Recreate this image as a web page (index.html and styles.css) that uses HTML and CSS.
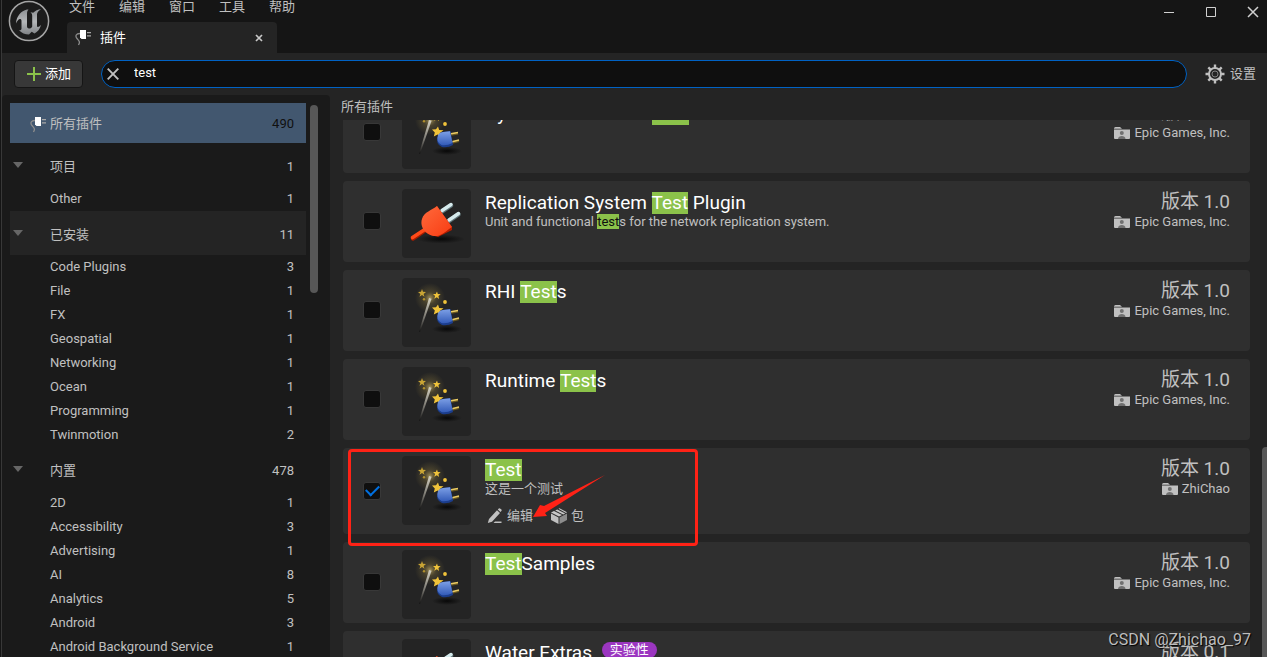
FILE: index.html
```
<!DOCTYPE html>
<html lang="zh-CN">
  <head>
    <meta charset="UTF-8">
    <meta name="viewport" content="width=device-width, initial-scale=1.0">
    <title>插件</title>
    <link rel="stylesheet" href="styles.css">
  </head>
  <body>
    <!-- shared icons -->
    <svg class="sprite" aria-hidden="true">
      <defs>
        <radialGradient id="glow">
          <stop offset="0" stop-color="#d8c070" stop-opacity="0.7"/>
          <stop offset="0.4" stop-color="#9a8440" stop-opacity="0.3"/>
          <stop offset="1" stop-color="#9a8440" stop-opacity="0"/>
        </radialGradient>
        <radialGradient id="shadow">
          <stop offset="0" stop-color="#080808"/>
          <stop offset="1" stop-color="#080808" stop-opacity="0"/>
        </radialGradient>
        <linearGradient id="wand" x1="0" y1="0" x2="0" y2="1">
          <stop offset="0" stop-color="#d8d4c4"/>
          <stop offset="0.6" stop-color="#74726c"/>
          <stop offset="1" stop-color="#111"/>
        </linearGradient>
        <linearGradient id="bluePlug" x1="0" y1="0" x2="0" y2="1">
          <stop offset="0" stop-color="#7da0e6"/>
          <stop offset="1" stop-color="#335bb8"/>
        </linearGradient>
        <linearGradient id="redPlug" x1="0" y1="0" x2="1" y2="1">
          <stop offset="0" stop-color="#ff6a3c"/>
          <stop offset="1" stop-color="#f83c12"/>
        </linearGradient>
        <linearGradient id="metal" x1="0" y1="0" x2="0" y2="1">
          <stop offset="0" stop-color="#8c8f92"/>
          <stop offset="0.5" stop-color="#b4b6b8"/>
          <stop offset="1" stop-color="#808386"/>
        </linearGradient>
      </defs>
      <symbol id="icon-wand" viewBox="0 0 69 69">
        <circle cx="28" cy="20" r="15" fill="url(#glow)"/>
        <ellipse cx="45" cy="51" rx="15" ry="4" fill="url(#shadow)"/>
        <path d="M27 20l2.600.8L18 54l-1-.5z" fill="url(#wand)"/>
        <path d="M20 11l1 2.800 3 .2-2.400 1.900.9 2.900-2.500-1.700-2.500 1.700.9-2.900-2.400-1.900 3-.2z" fill="#c9a535"/>
        <g fill="#f0c33a">
          <path d="M35 13.500l.8 2.600 2.900.1-2.300 1.800.7 2.900-2.300-1.700-2.600 1.500.9-2.700-2.100-1.900 2.700-.1z"/>
          <path d="M36 26.500l1.200 3.400 4.300.3-3.300 2.500 1 4.200-3.600-2.300-3.800 1.900 1-4.100-2.800-2.900 4-.2z"/>
          <circle cx="43" cy="24" r="1.900"/>
          <circle cx="22" cy="21.300" r="1.200" fill="#b08f2c"/>
        </g>
        <path d="M49 34.500l7-1.300M50 42.500l7-1.600" stroke="#6a5820" stroke-width="2.400" fill="none"/>
        <path d="M49 33.800l7-1.300M50 41.700l7-1.600" stroke="#e8c964" stroke-width="1.500" fill="none"/>
        <path d="M36 36q2-4 5-4l7.500-1L51 45q-5 3-11 2-7-3-4-11z" fill="#1b3d8c"/>
        <path d="M36 35q2-3 5-3l7-.8L50.500 43q-6 3-11 2-6-3-3.500-10z" fill="url(#bluePlug)"/>
      </symbol>
      <symbol id="icon-plug" viewBox="0 0 69 69">
        <ellipse cx="39" cy="50" rx="24" ry="4.500" fill="url(#shadow)"/>
        <path d="M11 49.500L22 42" stroke="#a81c00" stroke-width="4.500" stroke-linecap="round"/>
        <path d="M10.500 48.500L22 41" stroke="#ff4a18" stroke-width="3.600" stroke-linecap="round"/>
        <path d="M40 22.500l9-6M47 32l9.500-6.500" stroke="#5f7478" stroke-width="4.500" stroke-linecap="round"/>
        <path d="M40 21.500l9-6M47 31l9.500-6.500" stroke="#d5eaec" stroke-width="3.400" stroke-linecap="round"/>
        <path d="M35 17l15 21v3l-14 7-10-3-6-12z" fill="#b31d00"/>
        <path d="M35 17l15 21c-5 3-9 8-15 9-9 1-18-8-15-17 2-7 10-9 15-13z" fill="url(#redPlug)"/>
      </symbol>
      <symbol id="icon-socket" viewBox="0 0 17 17">
        <path d="M5 4.500C1 4.500 0 7 2 9.500s3.500 3 1.500 6.500" fill="none" stroke="#8c8c8c" stroke-width="1.300"/>
        <path d="M5 1h6v9H6.500L5 8.500z" fill="#fff"/>
        <path d="M12 3h4v1.300h-4zM12 6.200h4v1.300h-4z" fill="#a8a8a8"/>
      </symbol>
      <symbol id="icon-folder" viewBox="0 0 16 12">
        <path d="M0 1.500Q0 0 1.500 0H6l2 1.700H0z" fill="#c0c0c0"/>
        <path d="M0 2.500h16V11q0 1-1 1H1q-1 0-1-1z" fill="#c0c0c0"/>
        <circle cx="7.800" cy="6" r="2" fill="#707070"/>
        <path d="M4 12c0-4 7.500-4 7.500 0z" fill="#707070"/>
      </symbol>
    </svg>

    <div class="window">
      <header class="titlebar">
        <svg class="logo" viewBox="0 0 42 42" aria-hidden="true">
          <circle cx="21" cy="21" r="19.600" fill="#1c1c1c" stroke="#a5a5a5" stroke-width="1.500"/>
          <path d="M19 9.500C13 11 8.500 16 8 23.500c1.500-3.500 3-5 4.500-4.500 1 .3 1 1.500 1 3v6.500c0 1.500-1 2-2.500 1.700 2.500 2.800 6 4.200 10 4.300l2.700-2.800 2.800 1.700c3-1.500 5.500-4.500 6.500-8.500-1.800 2-3.300 2.500-4 1.500V14c.5-2 2-3.500 4-5-3 .3-6 1.800-7.800 3.800l-2.700-.5c1.500 1.200 1.700 2.200 1.700 3.700v10.500c-.7 1.500-2 2.200-3.200 2-1.500-.2-2-1-2-2.500V14c0-2 .3-3 1.500-4.500z" fill="url(#metal)"/>
        </svg>
        <div class="titlebar-main">
          <nav class="menu">
            <button>文件</button>
            <button>编辑</button>
            <button>窗口</button>
            <button>工具</button>
            <button>帮助</button>
          </nav>
          <div class="tab">
            <svg class="socket-icon" aria-hidden="true"><use href="#icon-socket"/></svg>
            <span class="tab-title">插件</span>
            <button class="tab-close" aria-label="关闭标签">
              <svg viewBox="0 0 8 8"><path d="M1 1l6 6M7 1L1 7" stroke="#c8c8c8" stroke-width="1.700"/></svg>
            </button>
          </div>
        </div>
        <div class="window-controls">
          <button aria-label="最小化"><svg viewBox="0 0 12 12"><path d="M1 6.500h10" stroke="#d0d0d0"/></svg></button>
          <button aria-label="最大化"><svg viewBox="0 0 12 12"><path d="M1.500 1.500h9v9h-9z" fill="none" stroke="#d0d0d0"/></svg></button>
          <button aria-label="关闭"><svg viewBox="0 0 12 12"><path d="M1 1l10 10M11 1L1 11" stroke="#d0d0d0" stroke-width="1.500"/></svg></button>
        </div>
      </header>

      <div class="toolbar">
        <button class="btn-add">
          <svg viewBox="0 0 14 14" aria-hidden="true"><path d="M7 0v14M0 7h14" stroke="#8bc24a" stroke-width="2"/></svg>
          添加
        </button>
        <div class="search">
          <button class="search-clear" aria-label="清除">
            <svg viewBox="0 0 12 12"><path d="M.7.700l10.600 10.600M11.300.700L.7 11.300" stroke="#c0c0c0" stroke-width="1.900"/></svg>
          </button>
          <input type="text" value="test" aria-label="搜索插件">
        </div>
        <button class="btn-settings">
          <svg viewBox="0 0 20 20" aria-hidden="true">
            <g fill="none" stroke="#c0c0c0">
              <circle cx="10" cy="10" r="6" stroke-width="2"/>
              <circle cx="10" cy="10" r="3" stroke="#808080"/>
              <path d="M10 .500v4M10 15.500v4M.5 10h4M15.500 10h4M3.300 3.300l2.800 2.800M13.900 13.900l2.800 2.800M16.700 3.300l-2.800 2.800M6.100 13.900l-2.800 2.800" stroke-width="2.400"/>
            </g>
          </svg>
          设置
        </button>
      </div>

      <div class="content">
        <aside class="sidebar">
          <nav class="categories">
            <a class="category-all" href="#all">
              <svg class="socket-icon" aria-hidden="true"><use href="#icon-socket"/></svg>
              <span>所有插件</span><span class="count">490</span>
            </a>
            <a class="category-group" href="#project"><span>项目</span><span class="count">1</span></a>
            <a class="category" href="#other"><span>Other</span><span class="count">1</span></a>
            <a class="category-group hovered" href="#installed"><span>已安装</span><span class="count">11</span></a>
            <a class="category" href="#code"><span>Code Plugins</span><span class="count">3</span></a>
            <a class="category" href="#file"><span>File</span><span class="count">1</span></a>
            <a class="category" href="#fx"><span>FX</span><span class="count">1</span></a>
            <a class="category" href="#geospatial"><span>Geospatial</span><span class="count">1</span></a>
            <a class="category" href="#networking"><span>Networking</span><span class="count">1</span></a>
            <a class="category" href="#ocean"><span>Ocean</span><span class="count">1</span></a>
            <a class="category" href="#programming"><span>Programming</span><span class="count">1</span></a>
            <a class="category" href="#twinmotion"><span>Twinmotion</span><span class="count">2</span></a>
            <a class="category-group" href="#builtin"><span>内置</span><span class="count">478</span></a>
            <a class="category" href="#2d"><span>2D</span><span class="count">1</span></a>
            <a class="category" href="#accessibility"><span>Accessibility</span><span class="count">3</span></a>
            <a class="category" href="#advertising"><span>Advertising</span><span class="count">1</span></a>
            <a class="category" href="#ai"><span>AI</span><span class="count">8</span></a>
            <a class="category" href="#analytics"><span>Analytics</span><span class="count">5</span></a>
            <a class="category" href="#android"><span>Android</span><span class="count">3</span></a>
            <a class="category" href="#android-bg"><span>Android Background Service</span><span class="count">1</span></a>
          </nav>
          <div class="sidebar-scroll"></div>
        </aside>

        <main class="plugins">
          <div class="breadcrumb">所有插件</div>
          <div class="plugin-view">
            <div class="plugin-list">
              <article class="plugin">
                <input type="checkbox" aria-label="Python Automation Test">
                <svg class="thumb" aria-hidden="true"><use href="#icon-wand"/></svg>
                <div class="plugin-info">
                  <h2>Python Automation <mark>Test</mark></h2>
                </div>
                <div class="plugin-meta">
                  <div class="version">版本 1.0</div>
                  <div class="author"><svg aria-hidden="true"><use href="#icon-folder"/></svg>Epic Games, Inc.</div>
                </div>
              </article>

              <article class="plugin">
                <input type="checkbox" aria-label="Replication System Test Plugin">
                <svg class="thumb" aria-hidden="true"><use href="#icon-plug"/></svg>
                <div class="plugin-info">
                  <h2>Replication System <mark>Test</mark> Plugin</h2>
                  <p>Unit and functional <mark>test</mark>s for the network replication system.</p>
                </div>
                <div class="plugin-meta">
                  <div class="version">版本 1.0</div>
                  <div class="author"><svg aria-hidden="true"><use href="#icon-folder"/></svg>Epic Games, Inc.</div>
                </div>
              </article>

              <article class="plugin">
                <input type="checkbox" aria-label="RHI Tests">
                <svg class="thumb" aria-hidden="true"><use href="#icon-wand"/></svg>
                <div class="plugin-info">
                  <h2>RHI <mark>Test</mark>s</h2>
                </div>
                <div class="plugin-meta">
                  <div class="version">版本 1.0</div>
                  <div class="author"><svg aria-hidden="true"><use href="#icon-folder"/></svg>Epic Games, Inc.</div>
                </div>
              </article>

              <article class="plugin">
                <input type="checkbox" aria-label="Runtime Tests">
                <svg class="thumb" aria-hidden="true"><use href="#icon-wand"/></svg>
                <div class="plugin-info">
                  <h2>Runtime <mark>Test</mark>s</h2>
                </div>
                <div class="plugin-meta">
                  <div class="version">版本 1.0</div>
                  <div class="author"><svg aria-hidden="true"><use href="#icon-folder"/></svg>Epic Games, Inc.</div>
                </div>
              </article>

              <article class="plugin">
                <input type="checkbox" aria-label="Test" checked>
                <svg class="thumb" aria-hidden="true"><use href="#icon-wand"/></svg>
                <div class="plugin-info">
                  <h2><mark>Test</mark></h2>
                  <p>这是一个测试</p>
                  <div class="plugin-actions">
                    <button>
                      <svg viewBox="0 0 16 16" aria-hidden="true"><path d="M.8 15l1.200-4 8-8.700 3 2.700-8 8.700zM10.800 1.500l1-1q.8-.6 1.600.2l1 .9q.6.700 0 1.300l-1 1.100zM6.500 15L8 13.500h6.500V15z" fill="#c0c0c0"/></svg>
                      编辑
                    </button>
                    <button>
                      <svg viewBox="0 0 16 16" aria-hidden="true">
                        <path d="M0 4.500l3-1.500 8 4-3 1.500zM4.200 2.400l2-1 8 4-2 1.100zM7.500.800L8.500.300l7.500 4-1 .6z" fill="#c8c8c8"/>
                        <path d="M0 5.500l7.500 4V16L0 12z" fill="#c0c0c0"/>
                        <path d="M8.500 9.500L16 5.500V12l-7.500 4z" fill="#8c8c8c"/>
                      </svg>
                      包
                    </button>
                  </div>
                </div>
                <div class="plugin-meta">
                  <div class="version">版本 1.0</div>
                  <div class="author"><svg aria-hidden="true"><use href="#icon-folder"/></svg>ZhiChao</div>
                </div>
              </article>

              <article class="plugin">
                <input type="checkbox" aria-label="TestSamples">
                <svg class="thumb" aria-hidden="true"><use href="#icon-wand"/></svg>
                <div class="plugin-info">
                  <h2><mark>Test</mark>Samples</h2>
                </div>
                <div class="plugin-meta">
                  <div class="version">版本 1.0</div>
                  <div class="author"><svg aria-hidden="true"><use href="#icon-folder"/></svg>Epic Games, Inc.</div>
                </div>
              </article>

              <article class="plugin">
                <input type="checkbox" aria-label="Water Extras">
                <svg class="thumb" aria-hidden="true"><use href="#icon-plug"/></svg>
                <div class="plugin-info">
                  <h2>Water Extras <span class="badge">实验性</span></h2>
                </div>
                <div class="plugin-meta">
                  <div class="version">版本 0.1</div>
                  <div class="author"><svg aria-hidden="true"><use href="#icon-folder"/></svg>Epic Games, Inc.</div>
                </div>
              </article>
            </div>
            <div class="plugin-scroll"></div>
          </div>
        </main>
      </div>
    </div>

    <!-- annotations over the editor window -->
    <div class="callout"></div>
    <svg class="callout-arrow" viewBox="0 0 74 46" aria-hidden="true">
      <path d="M72 1L11 32 7 31 0 43l14-1-2-3z" fill="#ff2216"/>
    </svg>
    <div class="watermark">CSDN @Zhichao_97</div>
  </body>
</html>
```
FILE: styles.css
```
* {
  box-sizing: border-box;
  margin: 0;
  padding: 0;
}

body {
  font-family: Roboto, "Noto Sans CJK SC", sans-serif;
  font-size: 13px;
  line-height: 16px;
  color: #c0c0c0;
  background: #151515;
  overflow: hidden;
}

button {
  display: flex;
  align-items: center;
  font: inherit;
  color: inherit;
  background: none;
  border: none;
}

a {
  color: inherit;
  text-decoration: none;
}

svg {
  display: block;
  flex-shrink: 0;
}

.sprite {
  position: absolute;
  width: 0;
  height: 0;
}

.window {
  height: 100vh;
  margin-left: 1px;
  display: flex;
  flex-direction: column;
  background: #242424;
  border-left: 1px solid #383838;
}

/* Title bar */
.titlebar {
  display: flex;
  height: 53px;
  background: #151515;
}

.logo {
  width: 42px;
  height: 42px;
  margin: 0 17px 0 6px;
}

.titlebar-main {
  flex: 1;
  display: flex;
  flex-direction: column;
  justify-content: space-between;
}

.menu {
  display: flex;
  gap: 24px;
  padding-left: 2px;
}

.menu button {
  height: 14px;
}

.tab {
  display: flex;
  align-items: center;
  width: 210px;
  height: 31px;
  padding: 0 14px 0 8px;
  color: #fff;
  background: #242424;
  border-radius: 4px 4px 0 0;
}

.socket-icon {
  width: 17px;
  height: 17px;
}

.tab-title {
  flex: 1;
  padding-left: 8px;
}

.tab-close svg {
  width: 8px;
  height: 8px;
}

.window-controls {
  display: flex;
  gap: 30px;
  padding: 6px 8px 0 0;
  align-items: flex-start;
}

.window-controls svg {
  width: 12px;
  height: 12px;
}

/* Toolbar */
.toolbar {
  display: flex;
  align-items: center;
  height: 42px;
  padding: 0 11px 0 12px;
}

.btn-add {
  gap: 4px;
  height: 28px;
  padding: 0 11px 0 12px;
  color: #fff;
  background: #383838;
  border: 1px solid #151515;
  border-radius: 4px;
}

.btn-add svg {
  width: 14px;
  height: 14px;
}

.search {
  flex: 1;
  display: flex;
  align-items: center;
  height: 28px;
  margin: 0 18px;
  padding: 0 5px;
  background: #0f0f0f;
  border: 1px solid #0062c4;
  border-radius: 14px;
}

.search-clear svg {
  width: 12px;
  height: 12px;
}

.search input {
  flex: 1;
  padding: 0 15px 2px;
  font: inherit;
  color: #fff;
  background: none;
  border: none;
  outline: none;
}

.btn-settings {
  gap: 5px;
}

.btn-settings svg {
  width: 20px;
  height: 20px;
}

.content {
  flex: 1;
  display: flex;
  min-height: 0;
}

/* Category tree */
.sidebar {
  display: flex;
  gap: 4px;
  width: 328px;
  padding: 8px 12px 0 8px;
  background: #1a1a1a;
  border-radius: 4px 4px 0 0;
  overflow: hidden;
}

.categories {
  flex: 1;
}

.categories a {
  display: flex;
  align-items: center;
  height: 24px;
  padding: 0 12px 0 40px;
}

.categories .category-all {
  height: 40px;
  padding: 2px 12px 0 20px;
  gap: 3px;
  background: #42576f;
}

.category-all .count {
  color: #101010;
}

.categories .category-group {
  height: 44px;
  padding: 4px 12px 0 3px;
}

.category-group::before {
  content: "";
  margin: 0 27px 4px 0;
  border: 5px solid transparent;
  border-top: 6px solid #666;
  border-bottom: none;
}

.hovered {
  background: #242424;
}

.count {
  margin-left: auto;
}

.sidebar-scroll {
  width: 8px;
  height: 188px;
  margin-top: 2px;
  background: #575757;
  border-radius: 4px;
}

/* Plugin list */
.plugins {
  flex: 1;
  display: flex;
  flex-direction: column;
  min-width: 0;
}

.breadcrumb {
  height: 25px;
  padding: 4px 11px;
}

.plugin-view {
  flex: 1;
  display: flex;
  gap: 12px;
  min-height: 0;
  padding-left: 13px;
  overflow: hidden;
}

/* scrolled part of the way into the first row */
.plugin-list {
  flex: 1;
  display: flex;
  flex-direction: column;
  gap: 8px;
  margin-top: -28px;
}

.plugin {
  flex-shrink: 0;
  display: flex;
  align-items: flex-start;
  min-height: 81px;
  padding: 0 20px;
  background: #2f2f2f;
  border-radius: 4px;
}

.plugin input {
  appearance: none;
  align-self: center;
  width: 18px;
  height: 18px;
  margin-bottom: 1px;
  background: #0f0f0f;
  border: 1px solid #383838;
  border-radius: 3px;
}

.plugin input:checked::before {
  content: "";
  display: block;
  width: 11px;
  height: 6px;
  margin: 4px 0 0 3px;
  border: solid #0070e0;
  border-width: 0 0 2px 2px;
  transform: rotate(-45deg);
}

.plugin input:checked {
  display: grid;
  place-items: center;
}

.plugin input:checked::before {
  margin: 0 0 3px;
}

.thumb {
  width: 69px;
  height: 69px;
  margin: 8px 14px 0 21px;
  background: #242424;
  border-radius: 4px;
}

.plugin-info {
  flex: 1;
  padding: 11px 0 8px;
}

.plugin h2 {
  display: flex;
  font-size: 19px;
  font-weight: 400;
  line-height: 22px;
  color: #fff;
  white-space: pre;
}

mark {
  color: inherit;
  background: #8bc24a;
}

.plugin p {
  line-height: 15px;
}

.plugin p mark {
  color: #0f0f0f;
}

.plugin-actions {
  display: flex;
  gap: 18px;
  padding: 10px 0 0 2px;
}

.plugin-actions button {
  gap: 4px;
  height: 20px;
}

.plugin-actions svg {
  width: 16px;
  height: 16px;
}

.plugin-meta {
  display: flex;
  flex-direction: column;
  align-items: flex-end;
  padding-top: 9px;
}

.version {
  font-size: 19px;
  line-height: 24px;
}

.author {
  display: flex;
  align-items: center;
  gap: 4px;
}

.author svg {
  width: 16px;
  height: 12px;
}

.badge {
  align-self: flex-start;
  margin-left: 5px;
  padding: 0 8px;
  font-size: 13px;
  line-height: 16px;
  background: #9b36c0;
  border-radius: 8px;
}

.plugin-scroll {
  width: 5px;
  margin-top: 327px;
  background: #575757;
  border-radius: 4px 0 0 0;
}

/* Annotations */
.callout {
  position: absolute;
  top: 449px;
  left: 348px;
  width: 350px;
  height: 97px;
  border: 3px solid #ff2216;
  border-radius: 4px;
}

.callout-arrow {
  position: absolute;
  top: 474px;
  left: 533px;
  width: 74px;
  height: 46px;
}

.watermark {
  position: absolute;
  right: 16px;
  bottom: 7px;
  font-size: 16px;
  line-height: 20px;
  color: #bdbdbd;
  text-shadow: 1px 1px 1px #000;
}
```
